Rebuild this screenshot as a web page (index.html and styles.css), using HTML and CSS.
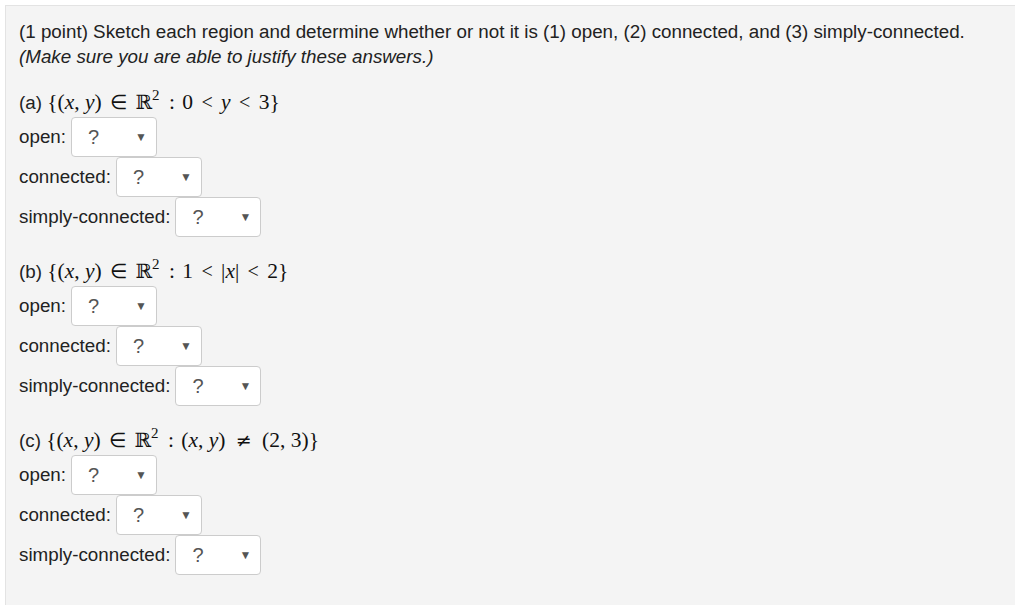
FILE: index.html
```html
<!DOCTYPE html>
<html>
<head>
<meta charset="utf-8">
<link rel="stylesheet" href="styles.css">
</head>
<body>
<div class="panel">
  <p class="intro">(1 point) Sketch each region and determine whether or not it is (1) open, (2) connected, and (3) simply-connected.<br><em>(Make sure you are able to justify these answers.)</em></p>

  <div class="part">
    <div class="mathline">(a) <span class="m">{(<i>x</i>, <i>y</i>) <span class="op">∈</span> <span class="bb">ℝ</span><sup>2</sup> <span class="col">:</span> 0 <span class="op">&lt;</span> <i>y</i> <span class="op">&lt;</span> 3}</span></div>
    <div class="row">open: <span class="sel"><span class="q">?</span><span class="arr">▼</span></span></div>
    <div class="row">connected: <span class="sel"><span class="q">?</span><span class="arr">▼</span></span></div>
    <div class="row">simply-connected: <span class="sel"><span class="q">?</span><span class="arr">▼</span></span></div>
  </div>

  <div class="part">
    <div class="mathline">(b) <span class="m">{(<i>x</i>, <i>y</i>) <span class="op">∈</span> <span class="bb">ℝ</span><sup>2</sup> <span class="col">:</span> 1 <span class="op">&lt;</span> |<i>x</i>| <span class="op">&lt;</span> 2}</span></div>
    <div class="row">open: <span class="sel"><span class="q">?</span><span class="arr">▼</span></span></div>
    <div class="row">connected: <span class="sel"><span class="q">?</span><span class="arr">▼</span></span></div>
    <div class="row">simply-connected: <span class="sel"><span class="q">?</span><span class="arr">▼</span></span></div>
  </div>

  <div class="part">
    <div class="mathline">(c) <span class="m">{(<i>x</i>, <i>y</i>) <span class="op">∈</span> <span class="bb">ℝ</span><sup>2</sup> <span class="col">:</span> (<i>x</i>, <i>y</i>) <span class="op ne">≠</span> (2, 3)}</span></div>
    <div class="row">open: <span class="sel"><span class="q">?</span><span class="arr">▼</span></span></div>
    <div class="row">connected: <span class="sel"><span class="q">?</span><span class="arr">▼</span></span></div>
    <div class="row">simply-connected: <span class="sel"><span class="q">?</span><span class="arr">▼</span></span></div>
  </div>
</div>
</body>
</html>
```

FILE: styles.css
```css
html, body {
  margin: 0;
  padding: 0;
  background: #ffffff;
}
body {
  padding: 5px 0 0 5px;
  font-family: "Liberation Sans", Arial, sans-serif;
  font-size: 18.8px;
  color: #222;
  overflow: hidden;
  height: 600px;
}
.panel {
  background: #f4f4f4;
  border: 1px solid #e3e3e3;
  border-right: none;
  border-bottom: none;
  padding: 13px 0 40px 13px;
  height: 560px;
}
.intro {
  margin: 0;
  line-height: 25px;
}
.part {
  margin-top: 19px;
}
.part:first-of-type {
  margin-top: 18px;
}
.mathline {
  height: 30px;
  line-height: 30px;
}
.m {
  font-family: "Liberation Serif", "Times New Roman", serif;
  font-size: 21.5px;
  color: #111;
}
.m i {
  font-style: italic;
}
.m .op {
  margin: 0 3px;
  font-size: 20px;
}
.m .ne {
  font-family: "DejaVu Serif", serif;
  font-size: 19px;
  margin: 0 5px;
}
.m .col {
  margin: 0 2px;
}
.m .bb {
  font-family: "DejaVu Serif", serif;
  font-size: 20px;
}
.m sup {
  font-size: 15px;
  line-height: 0;
  vertical-align: 9px;
  margin-right: 2px;
}
.row {
  height: 40px;
  display: flex;
  align-items: center;
}
.sel {
  box-sizing: border-box;
  display: inline-flex;
  align-items: center;
  justify-content: space-between;
  width: 86px;
  height: 40px;
  margin-left: 5px;
  padding: 0 9px 0 16px;
  background: #ffffff;
  border: 1px solid #cccccc;
  border-radius: 4px;
  color: #555;
}
.sel .q {
  font-size: 20px;
}
.sel .arr {
  font-size: 12px;
  color: #555;
}
```
